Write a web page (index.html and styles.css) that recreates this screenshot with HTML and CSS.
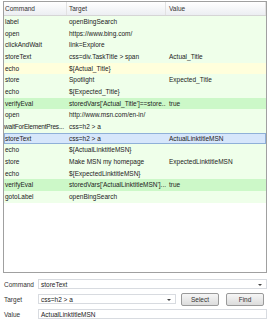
FILE: index.html
```html
<!DOCTYPE html>
<html lang="en">
<head>
    <meta charset="UTF-8">
    <title>Selenium IDE</title>
    <link rel="stylesheet" href="styles.css">
</head>
<body>
    <div class="ide">
        <div class="grid">
            <div class="row head">
                <div class="cell c1">Command</div>
                <div class="cell c2">Target</div>
                <div class="cell c3">Value</div>
            </div>
            <div class="row"><div class="cell c1">label</div><div class="cell c2">openBingSearch</div><div class="cell c3"></div></div>
            <div class="row"><div class="cell c1">open</div><div class="cell c2">https://www.bing.com/</div><div class="cell c3"></div></div>
            <div class="row"><div class="cell c1">clickAndWait</div><div class="cell c2">link=Explore</div><div class="cell c3"></div></div>
            <div class="row"><div class="cell c1">storeText</div><div class="cell c2">css=div.TaskTitle &gt; span</div><div class="cell c3">Actual_Title</div></div>
            <div class="row echo"><div class="cell c1">echo</div><div class="cell c2">${Actual_Title}</div><div class="cell c3"></div></div>
            <div class="row"><div class="cell c1">store</div><div class="cell c2">Spotlight</div><div class="cell c3">Expected_Title</div></div>
            <div class="row"><div class="cell c1">echo</div><div class="cell c2">${Expected_Title}</div><div class="cell c3"></div></div>
            <div class="row pass"><div class="cell c1">verifyEval</div><div class="cell c2">storedVars['Actual_Title']==store...</div><div class="cell c3">true</div></div>
            <div class="row"><div class="cell c1">open</div><div class="cell c2">http://www.msn.com/en-in/</div><div class="cell c3"></div></div>
            <div class="row"><div class="cell c1 tight">waitForElementPres...</div><div class="cell c2">css=h2 &gt; a</div><div class="cell c3"></div></div>
            <div class="row selected"><div class="cell c1">storeText</div><div class="cell c2">css=h2 &gt; a</div><div class="cell c3">ActualLinktitleMSN</div></div>
            <div class="row"><div class="cell c1">echo</div><div class="cell c2">${ActualLinktitleMSN}</div><div class="cell c3"></div></div>
            <div class="row"><div class="cell c1">store</div><div class="cell c2">Make MSN my homepage</div><div class="cell c3">ExpectedLinktitleMSN</div></div>
            <div class="row"><div class="cell c1">echo</div><div class="cell c2">${ExpectedLinktitleMSN}</div><div class="cell c3"></div></div>
            <div class="row pass"><div class="cell c1">verifyEval</div><div class="cell c2">storedVars['ActualLinktitleMSN']...</div><div class="cell c3">true</div></div>
            <div class="row"><div class="cell c1">gotoLabel</div><div class="cell c2">openBingSearch</div><div class="cell c3"></div></div>
        </div>

        <div class="form">
            <div class="field">
                <span class="label">Command</span>
                <div class="input wide">storeText<span class="arrow"></span></div>
            </div>
            <div class="field">
                <span class="label">Target</span>
                <div class="input target">css=h2 &gt; a<span class="arrow"></span></div>
                <button class="btn">Select</button>
                <button class="btn">Find</button>
            </div>
            <div class="field">
                <span class="label">Value</span>
                <div class="input wide">ActualLinktitleMSN</div>
            </div>
        </div>
    </div>
</body>
</html>
```

FILE: styles.css
```css
* {
    margin: 0;
    padding: 0;
    box-sizing: border-box;
}

body {
    background: #ffffff;
    font-family: 'Liberation Sans', Arial, sans-serif;
    font-size: 6.5px;
    color: #222222;
}

.ide {
    width: 271px;
    height: 320px;
    display: flex;
    flex-direction: column;
}

.grid {
    margin: 1px 4px 0 3px;
    height: 273px;
    border: 1px solid #a0a0a0;
    background: #ffffff;
    overflow: hidden;
}

.row {
    display: flex;
    height: 11.67px;
    line-height: 11.67px;
    background: #efffea;
    white-space: nowrap;
}

.row.head {
    height: 14px;
    line-height: 14px;
    background: linear-gradient(#ffffff, #eceef2);
    border-bottom: 1px solid #d5d5d5;
    color: #333333;
}

.row.head .cell {
    border-right: 1px solid #e2e2e2;
}

.row.echo {
    background: #ffffdc;
}

.row.pass {
    background: #ccf8c8;
}

.row.selected {
    background: #d6e6fb;
    outline: 1px solid #8fb0d8;
    outline-offset: -1px;
}

.cell {
    overflow: hidden;
    padding-left: 1px;
}

.c1 {
    width: 63px;
}

.c1.tight {
    letter-spacing: -0.2px;
    padding-left: 0;
}

.c2 {
    width: 99px;
    padding-left: 2px;
}

.c3 {
    flex: 1;
    padding-left: 3px;
}

.form {
    display: flex;
    flex-direction: column;
    gap: 3px;
    padding: 5px 4px 0 3px;
}

.field {
    display: flex;
    align-items: center;
    height: 12px;
}

.label {
    width: 35px;
    padding-left: 1px;
    color: #333333;
}

.input {
    position: relative;
    height: 10px;
    line-height: 9px;
    border: 1px solid #d8dbe0;
    padding-left: 2px;
    background: #ffffff;
}

.input.wide {
    flex: 1;
}

.input.target {
    width: 138px;
}

.arrow {
    position: absolute;
    right: 4px;
    top: 4px;
    border-left: 2px solid transparent;
    border-right: 2px solid transparent;
    border-top: 2px solid #444444;
}

.btn {
    height: 13px;
    width: 38px;
    margin-left: 5px;
    font-family: inherit;
    font-size: 6.5px;
    color: #333333;
    border: 1px solid #9a9a9a;
    border-radius: 2px;
    background: linear-gradient(#f6f6f6, #dcdcdc);
}

.btn + .btn {
    margin-left: 7px;
}
```
